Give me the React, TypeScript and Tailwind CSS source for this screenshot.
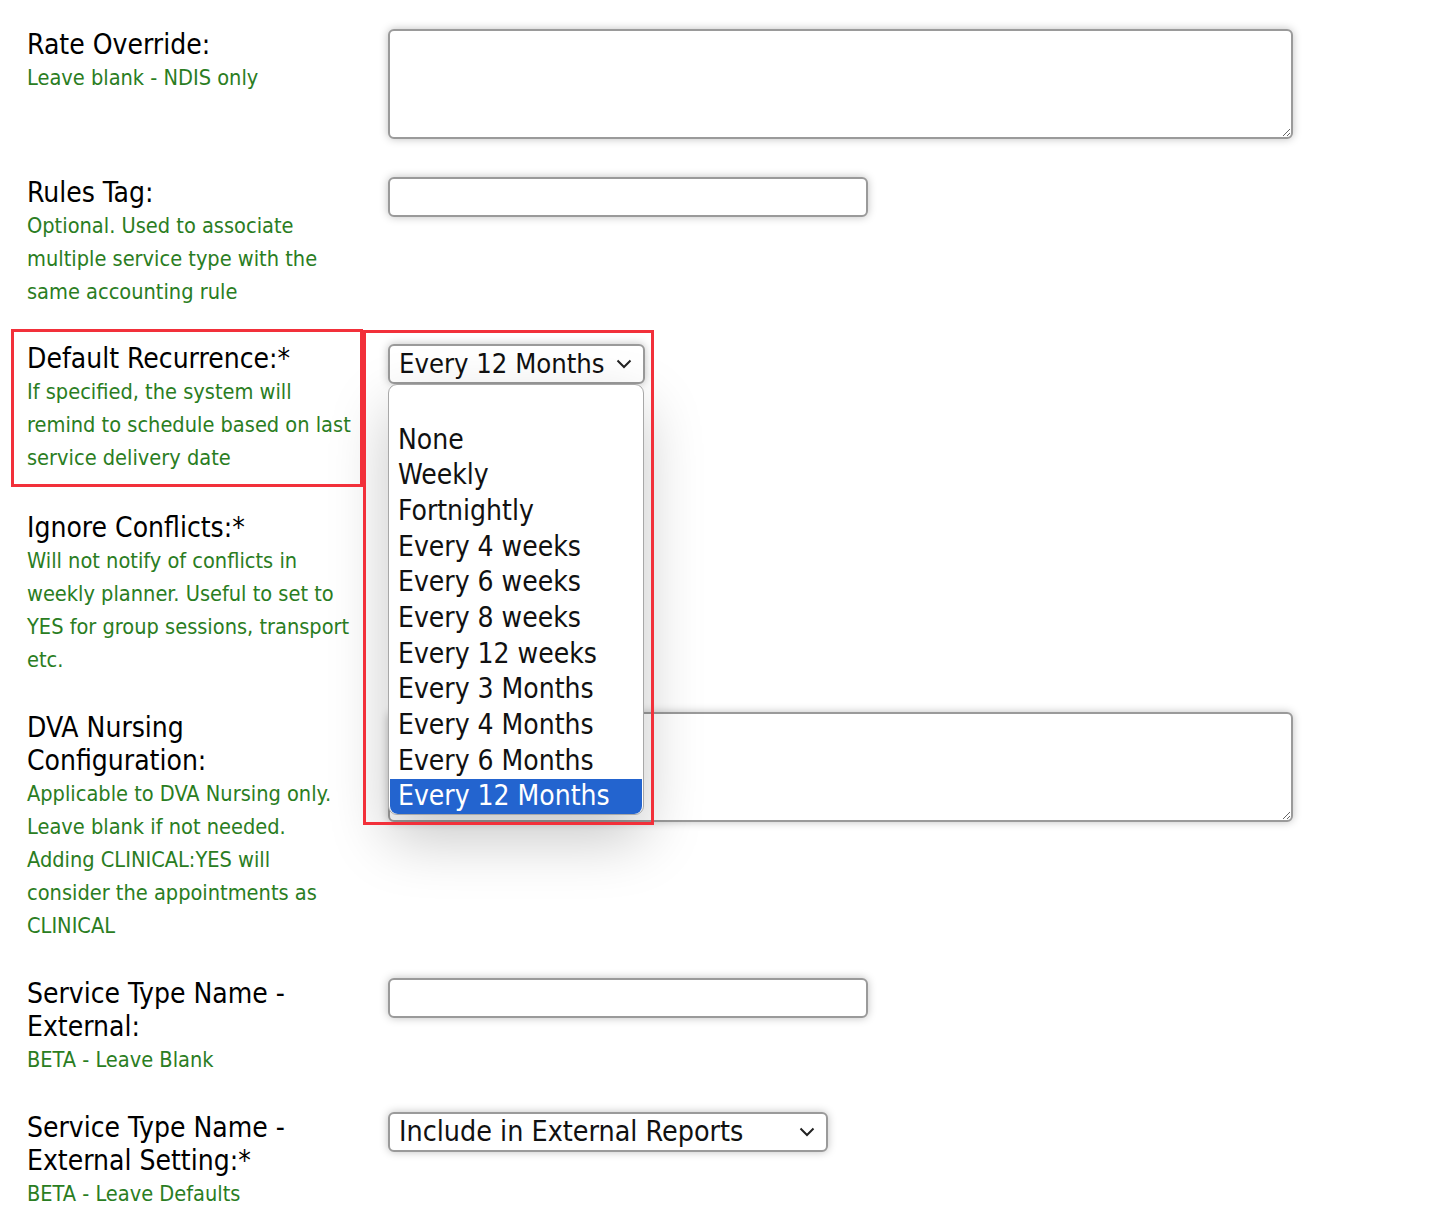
import React from "react";

const font = { fontFamily: '"DejaVu Sans Condensed", "DejaVu Sans", sans-serif' };

function Label({ lines, help }: { lines: string[]; help: string[] }) {
  return (
    <div className="w-[361px] shrink-0">
      {lines.map((l, i) => (
        <div key={i} className="text-[28px] leading-[33px] text-black whitespace-nowrap">
          {l}
        </div>
      ))}
      {help.map((l, i) => (
        <div key={i} className="text-[21.6px] leading-[33px] text-[#2a7d22] whitespace-nowrap">
          {l}
        </div>
      ))}
    </div>
  );
}

function Chevron() {
  return (
    <svg width="16" height="10" viewBox="0 0 16 10" className="shrink-0">
      <path d="M1.5 1.5 L8 8 L14.5 1.5" fill="none" stroke="#222" strokeWidth="2" />
    </svg>
  );
}

const boxCls =
  "border-2 border-[#9a9a9a] rounded-[6px] bg-white shadow-[0_0_9px_rgba(0,0,0,0.25)]";

export default function App() {
  const options = [
    "",
    "None",
    "Weekly",
    "Fortnightly",
    "Every 4 weeks",
    "Every 6 weeks",
    "Every 8 weeks",
    "Every 12 weeks",
    "Every 3 Months",
    "Every 4 Months",
    "Every 6 Months",
    "Every 12 Months",
  ];
  return (
    <div className="relative w-[1456px] h-[1210px] bg-white overflow-hidden" style={font}>
      <div className="pl-[27px] pt-[28px] flex flex-col">
        {/* Rate Override */}
        <div className="flex items-start mb-[37px]">
          <Label lines={["Rate Override:"]} help={["Leave blank - NDIS only"]} />
          <textarea className={`${boxCls} mt-[1px] w-[905px] h-[110px] block outline-none`} />
        </div>
        {/* Rules Tag */}
        <div className="flex items-start mb-[34px]">
          <Label
            lines={["Rules Tag:"]}
            help={["Optional. Used to associate", "multiple service type with the", "same accounting rule"]}
          />
          <div className={`${boxCls} mt-[1px] w-[480px] h-[40px]`} />
        </div>
        {/* Default Recurrence */}
        <div className="flex items-start mb-[37px]">
          <Label
            lines={["Default Recurrence:*"]}
            help={["If specified, the system will", "remind to schedule based on last", "service delivery date"]}
          />
          <div className={`${boxCls} mt-[2px] w-[257px] h-[40px] flex items-center justify-between pl-[9px] pr-[11px]`}>
            <span className="text-[27.2px] leading-none text-[#111] whitespace-nowrap">Every 12 Months</span>
            <Chevron />
          </div>
        </div>
        {/* Ignore Conflicts */}
        <div className="flex items-start mb-[35px]">
          <Label
            lines={["Ignore Conflicts:*"]}
            help={[
              "Will not notify of conflicts in",
              "weekly planner. Useful to set to",
              "YES for group sessions, transport",
              "etc.",
            ]}
          />
        </div>
        {/* DVA Nursing */}
        <div className="flex items-start mb-[35px]">
          <Label
            lines={["DVA Nursing", "Configuration:"]}
            help={[
              "Applicable to DVA Nursing only.",
              "Leave blank if not needed.",
              "Adding CLINICAL:YES will",
              "consider the appointments as",
              "CLINICAL",
            ]}
          />
          <textarea className={`${boxCls} mt-[1px] w-[905px] h-[110px] block outline-none`} />
        </div>
        {/* Service Type Name - External */}
        <div className="flex items-start mb-[35px]">
          <Label lines={["Service Type Name -", "External:"]} help={["BETA - Leave Blank"]} />
          <div className={`${boxCls} mt-[1px] w-[480px] h-[40px]`} />
        </div>
        {/* Service Type Name - External Setting */}
        <div className="flex items-start">
          <Label lines={["Service Type Name -", "External Setting:*"]} help={["BETA - Leave Defaults"]} />
          <div className={`${boxCls} mt-[1px] w-[440px] h-[40px] flex items-center justify-between pl-[9px] pr-[11px]`}>
            <span className="text-[28.4px] leading-none text-[#111] whitespace-nowrap">
              Include in External Reports
            </span>
            <Chevron />
          </div>
        </div>
      </div>

      {/* Open dropdown list */}
      <div className="absolute left-[388px] top-[384px] w-[256px] h-[431px] rounded-[9px] border border-[#a8a8a8] bg-white overflow-hidden shadow-[0_24px_60px_rgba(0,0,0,0.22)] p-[1px]">
        {options.map((o, i) => (
          <div
            key={i}
            className={`h-[35.7px] flex items-center pl-[8px] text-[28px] whitespace-nowrap ${
              i === options.length - 1 ? "bg-[#2364cf] text-white rounded-b-[8px]" : "text-[#111]"
            }`}
          >
            {o}
          </div>
        ))}
      </div>

      {/* Annotation boxes */}
      <div className="absolute left-[11px] top-[329px] w-[352px] h-[158px] border-[3px] border-[#f2303a]" />
      <div className="absolute left-[363px] top-[330px] w-[291px] h-[495px] border-[3px] border-[#f2303a]" />
    </div>
  );
}
